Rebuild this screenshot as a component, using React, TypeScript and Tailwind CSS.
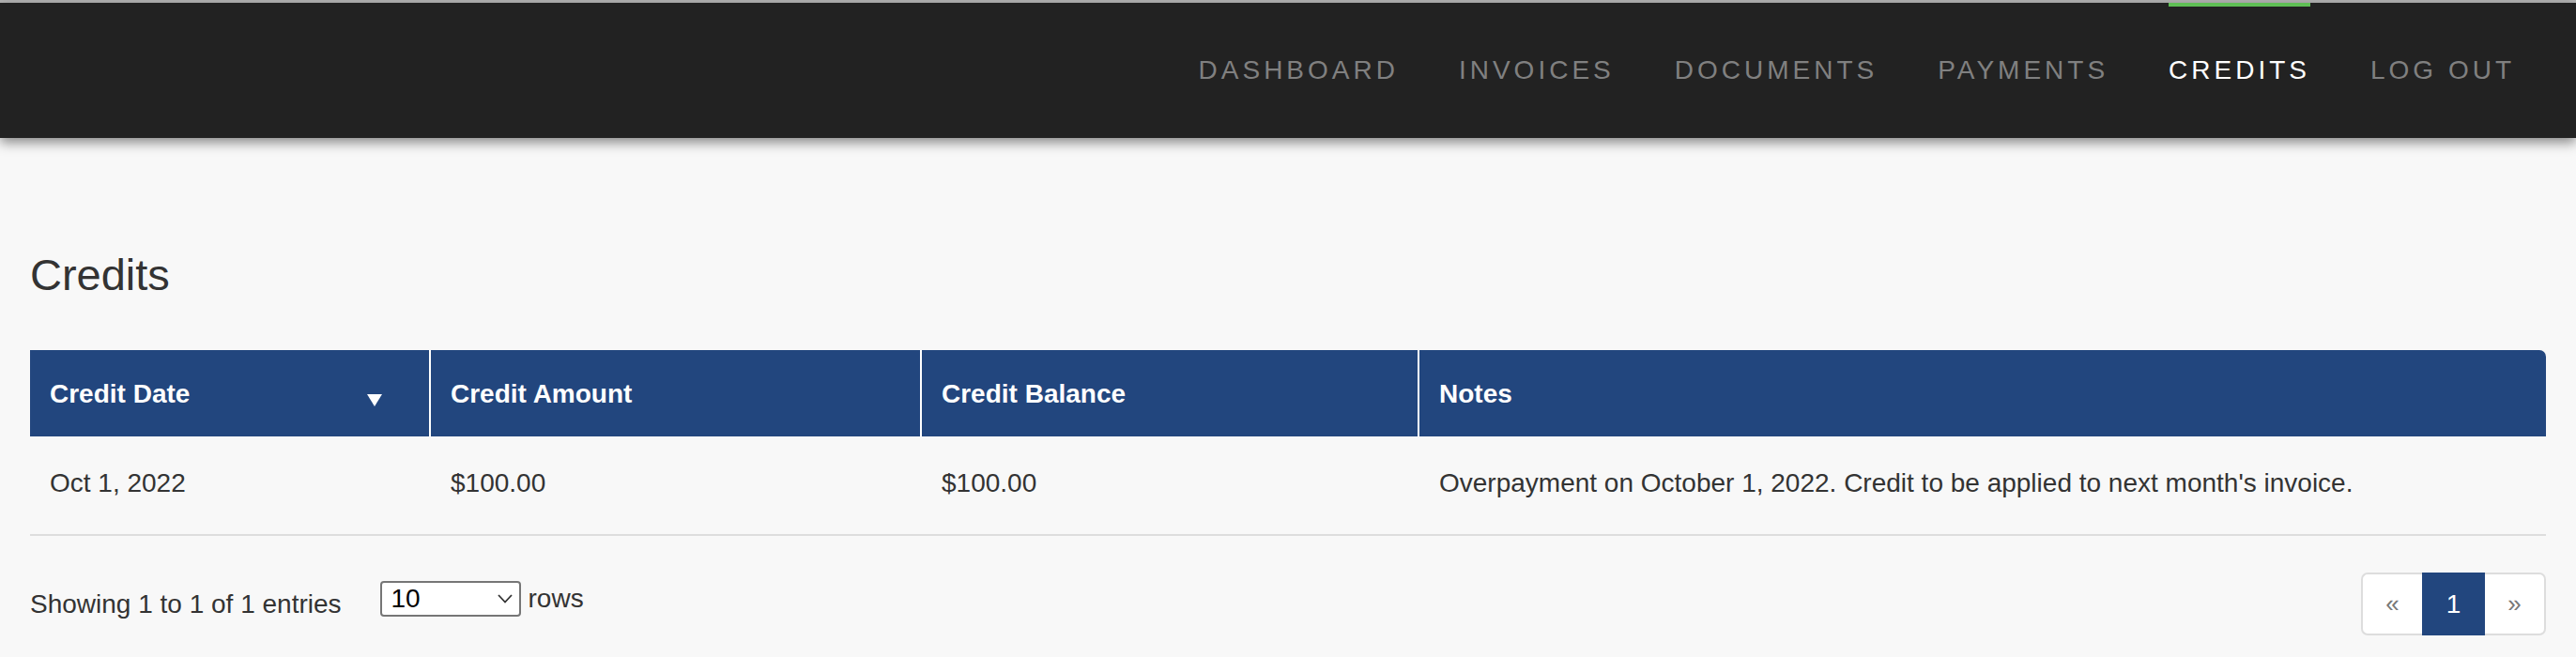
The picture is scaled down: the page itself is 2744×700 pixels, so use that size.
import React from "react";

const navItems = ["DASHBOARD", "INVOICES", "DOCUMENTS", "PAYMENTS", "CREDITS", "LOG OUT"];

export default function App() {
  return (
    <div className="min-h-screen bg-[#f8f8f8] border-t-[3px] border-[#b4b4b4] font-['Liberation_Sans',Arial,sans-serif] text-[#333]">
      <nav className="relative z-10 h-[144px] bg-[#222222] shadow-[0_5px_12px_rgba(0,0,0,0.45)] flex justify-end items-stretch pr-[65px] gap-[64px]">
        {navItems.map((item) => (
          <a
            key={item}
            className={
              item === "CREDITS"
                ? "flex items-center border-t-4 border-[#5fbf55] pb-[5px] text-[28px] tracking-[4px] text-white leading-[32px]"
                : "flex items-center border-t-4 border-transparent pb-[5px] text-[28px] tracking-[4px] text-[#808080] leading-[32px]"
            }
          >
            {item}
          </a>
        ))}
      </nav>

      <main className="px-[32px]">
        <h2 className="mt-[120px] text-[47px] leading-[52px] font-normal text-[#333]">Credits</h2>

        <div className="mt-[54px]">
          <div className="grid grid-cols-[427px_523px_530px_1fr] bg-[#22467e] text-white text-[28px] font-bold leading-[40px] rounded-tr-[7px]">
            <div className="flex items-center border-r-2 border-white pl-[21px] pt-[27px] pb-[25px]">
              <span>Credit Date</span>
              <svg className="ml-auto mr-[50px] mt-[12px]" width="16" height="13" viewBox="0 0 16 13">
                <polygon points="0,0 16,0 8,13" fill="#ffffff" />
              </svg>
            </div>
            <div className="border-r-2 border-white pl-[21px] pt-[27px] pb-[25px]">Credit Amount</div>
            <div className="border-r-2 border-white pl-[21px] pt-[27px] pb-[25px]">Credit Balance</div>
            <div className="pl-[21px] pt-[27px] pb-[25px]">Notes</div>
          </div>
          <div className="grid grid-cols-[427px_523px_530px_1fr] text-[28px] leading-[40px] text-[#333] border-b-2 border-[#dddddd]">
            <div className="pl-[21px] pt-[30px] pb-[34px]">Oct 1, 2022</div>
            <div className="pl-[21px] pt-[30px] pb-[34px]">$100.00</div>
            <div className="pl-[21px] pt-[30px] pb-[34px]">$100.00</div>
            <div className="pl-[21px] pt-[30px] pb-[34px]">
              Overpayment on October 1, 2022. Credit to be applied to next month's invoice.
            </div>
          </div>
        </div>

        <div className="mt-[39px] h-[67px] flex items-center justify-between">
          <div className="flex items-center">
            <span className="text-[28px] leading-[40px] text-[#333]">Showing 1 to 1 of 1 entries</span>
            <div className="ml-[41px] mb-[11px] flex items-center">
              <div className="w-[150px] h-[38px] border-2 border-[#767676] rounded-[4px] bg-white flex items-center pl-[10px] pr-[7px] text-[28px] leading-[32px] text-black">
                <span>10</span>
                <svg className="ml-auto" width="16" height="10" viewBox="0 0 16 10">
                  <polyline points="1,1 8,8.5 15,1" fill="none" stroke="#333" strokeWidth="1.8" />
                </svg>
              </div>
              <span className="ml-[8px] text-[28px] leading-[40px] text-[#333]">rows</span>
            </div>
          </div>

          <div className="flex h-[67px]">
            <div className="w-[65px] h-full flex items-center justify-center bg-white border-y-2 border-l-2 border-[#dddddd] rounded-l-[7px] text-[26px] text-[#777]">
              «
            </div>
            <div className="w-[67px] h-full flex items-center justify-center bg-[#22467e] text-white text-[28px]">
              1
            </div>
            <div className="w-[65px] h-full flex items-center justify-center bg-white border-y-2 border-r-2 border-[#dddddd] rounded-r-[7px] text-[26px] text-[#777]">
              »
            </div>
          </div>
        </div>
      </main>
    </div>
  );
}
